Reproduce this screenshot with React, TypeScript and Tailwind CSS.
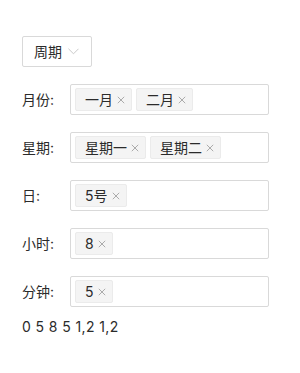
import React from 'react';

const font = { fontFamily: 'Inter, "Noto Sans CJK SC", sans-serif' };

const rows: { label: string; tags: string[] }[] = [
  { label: '月份:', tags: ['一月', '二月'] },
  { label: '星期:', tags: ['星期一', '星期二'] },
  { label: '日:', tags: ['5号'] },
  { label: '小时:', tags: ['8'] },
  { label: '分钟:', tags: ['5'] },
];

const Tag = ({ text }: { text: string }) => (
  <span className="flex items-center h-[23px] mr-[4px] pl-[9px] pr-[6px] bg-[#f4f4f4] border border-[#ebebeb] rounded-[2px] text-[14px] text-[#2b2b2b]">
    <span>{text}</span>
    <svg className="ml-[4px] w-[8px] h-[8px] text-[#a0a0a0]" viewBox="0 0 10 10" fill="none" stroke="currentColor" strokeWidth={1.1}>
      <path d="M1 1l8 8M9 1l-8 8" />
    </svg>
  </span>
);

const App = () => {
  return (
    <div className="min-h-screen bg-white pl-[22px] pt-[36px]" style={font}>
      {/* 周期 select */}
      <div className="flex items-center w-[70px] h-[31px] border border-[#d9d9d9] rounded-[2px] pl-[11px] text-[14px] text-[#2b2b2b]">
        <span>周期</span>
        <svg className="ml-[6px] w-[11px] h-[7px] text-[#c4c4c4]" viewBox="0 0 12 7" fill="none" stroke="currentColor" strokeWidth={1}>
          <path d="M0.5 0.5l5.5 5.5 5.5-5.5" />
        </svg>
      </div>

      <div className="flex flex-col gap-[17px] mt-[17px]">
        {rows.map((r) => (
          <div key={r.label} className="flex items-center">
            <span className="w-[48px] text-[14px] text-[#2b2b2b]">{r.label}</span>
            <div className="flex items-center w-[199px] h-[31px] border border-[#d9d9d9] rounded-[2px] pl-[4px]">
              {r.tags.map((t) => (
                <Tag key={t} text={t} />
              ))}
            </div>
          </div>
        ))}
      </div>

      <div className="mt-[10px] text-[14px] leading-[20px] tracking-[0.4px] text-[#2b2b2b]">0 5 8 5 1,2 1,2</div>
    </div>
  );
};

export default App;
